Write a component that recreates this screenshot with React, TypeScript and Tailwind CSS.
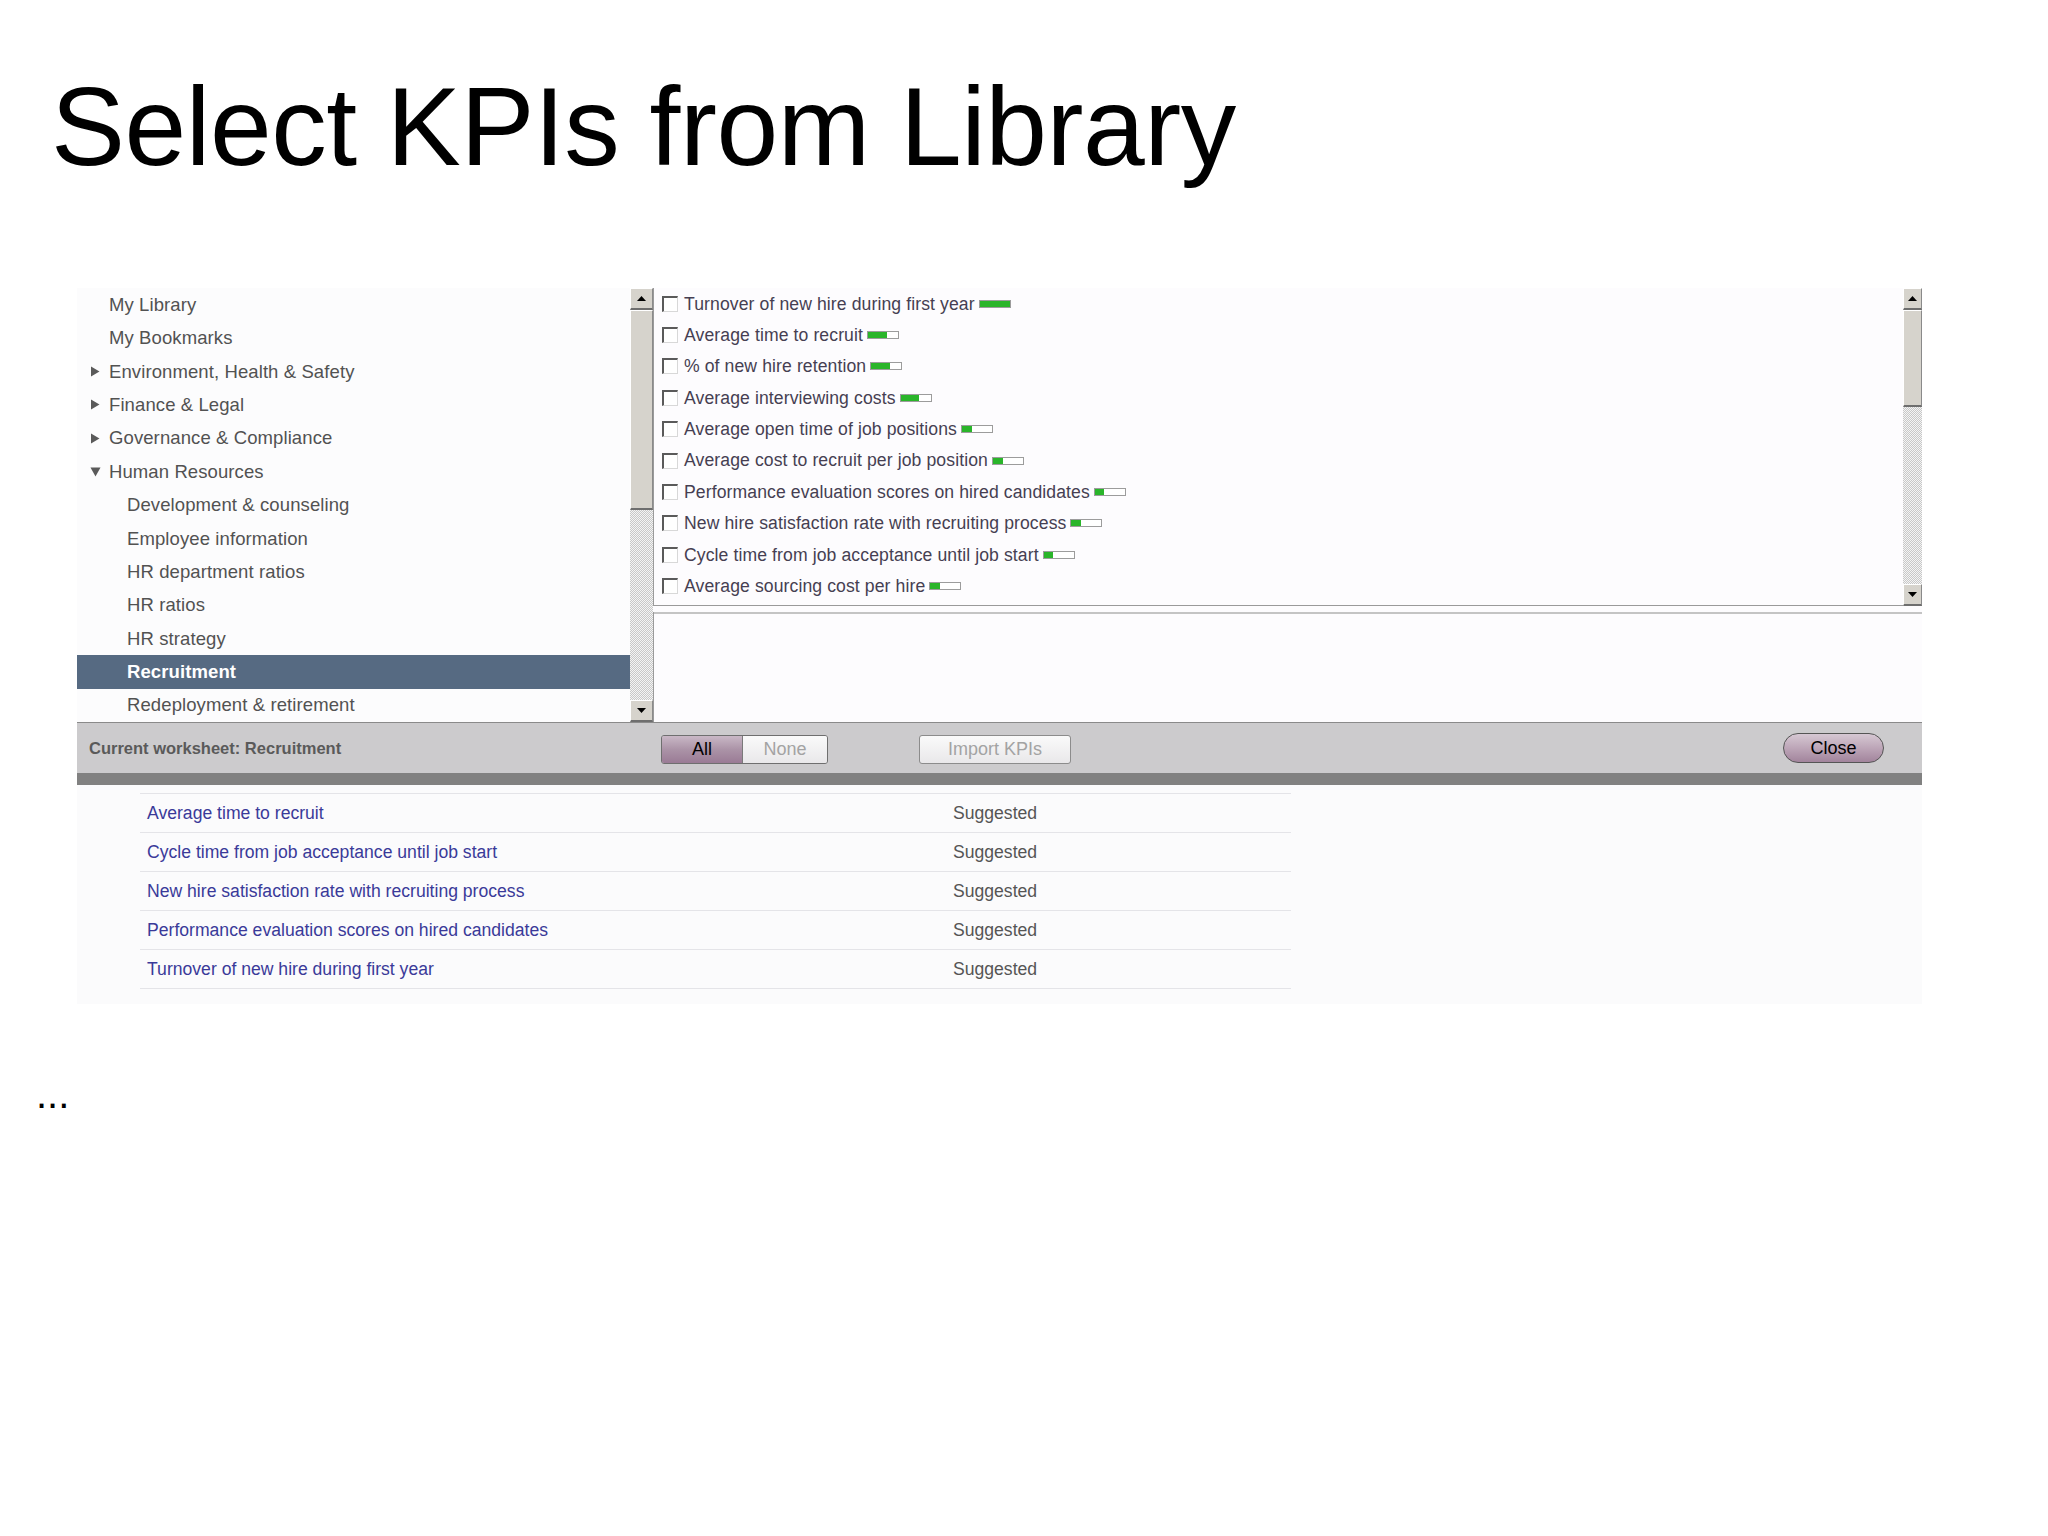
import React from 'react';

const treeItems = [
  { label: 'My Library', level: 0 },
  { label: 'My Bookmarks', level: 0 },
  { label: 'Environment, Health & Safety', level: 0, arrow: 'right' },
  { label: 'Finance & Legal', level: 0, arrow: 'right' },
  { label: 'Governance & Compliance', level: 0, arrow: 'right' },
  { label: 'Human Resources', level: 0, arrow: 'down' },
  { label: 'Development & counseling', level: 1 },
  { label: 'Employee information', level: 1 },
  { label: 'HR department ratios', level: 1 },
  { label: 'HR ratios', level: 1 },
  { label: 'HR strategy', level: 1 },
  { label: 'Recruitment', level: 1, selected: true },
  { label: 'Redeployment & retirement', level: 1 },
];

const kpis = [
  { label: 'Turnover of new hire during first year', score: 100 },
  { label: 'Average time to recruit', score: 62 },
  { label: '% of new hire retention', score: 62 },
  { label: 'Average interviewing costs', score: 62 },
  { label: 'Average open time of job positions', score: 34 },
  { label: 'Average cost to recruit per job position', score: 32 },
  { label: 'Performance evaluation scores on hired candidates', score: 32 },
  { label: 'New hire satisfaction rate with recruiting process', score: 32 },
  { label: 'Cycle time from job acceptance until job start', score: 32 },
  { label: 'Average sourcing cost per hire', score: 32 },
];

const selected = [
  'Average time to recruit',
  'Cycle time from job acceptance until job start',
  'New hire satisfaction rate with recruiting process',
  'Performance evaluation scores on hired candidates',
  'Turnover of new hire during first year',
];

function Arrow({ dir }: { dir: 'up' | 'down' }) {
  return (
    <svg width="9" height="5" viewBox="0 0 9 5">
      {dir === 'up' ? <polygon points="0,5 9,5 4.5,0" fill="#000" /> : <polygon points="0,0 9,0 4.5,5" fill="#000" />}
    </svg>
  );
}

function ScrollButton({ dir }: { dir: 'up' | 'down' }) {
  return (
    <div className="h-[22px] flex items-center justify-center bg-[#d6d3cc] border-t border-l border-t-white border-l-white border-b-2 border-r border-b-[#6e6e6e] border-r-[#8a8a8a]">
      <Arrow dir={dir} />
    </div>
  );
}

function Scrollbar({ thumb, width }: { thumb: string; width: string }) {
  return (
    <div className={`${width} flex flex-col shrink-0`}>
      <ScrollButton dir="up" />
      <div className={`${thumb} bg-[#d6d3cc] border-t border-l border-t-white border-l-white border-b-2 border-r border-b-[#6e6e6e] border-r-[#8a8a8a]`} />
      <div className="flex-1 bg-[repeating-conic-gradient(#c8c8c8_0_25%,#f4f4f4_0_50%)] bg-size-[2px_2px]" />
      <ScrollButton dir="down" />
    </div>
  );
}

function TreeTriangle({ dir }: { dir?: string }) {
  if (!dir) return <span className="w-[19px]" />;
  return (
    <span className="w-[19px] flex items-center">
      <svg width="11" height="11" viewBox="0 0 11 11">
        {dir === 'right' ? (
          <polygon points="1,0.5 9.5,5.5 1,10.5" fill="#5a5a5a" />
        ) : (
          <polygon points="0.5,1.5 10.5,1.5 5.5,10.5" fill="#5a5a5a" />
        )}
      </svg>
    </span>
  );
}

export default function App() {
  return (
    <div className="w-[2048px] h-[1536px] bg-white font-['Liberation_Sans',Arial,sans-serif] overflow-hidden">
      <h1 className="pl-[51px] pt-[72px] text-[111px] leading-none text-black tracking-[-0.5px]">
        Select KPIs from Library
      </h1>

      <div className="ml-[77px] mt-[105px] w-[1845px] bg-[#fbfbfc]">
        {/* browser area */}
        <div className="flex h-[434px]">
          <div className="w-[553px] grid grid-rows-13 bg-[#fcfcfd]">
            {treeItems.map((item) => (
              <div
                key={item.label}
                className={`flex items-center text-[18.5px] tracking-[0.1px] ${
                  item.selected ? 'bg-[#566a82] text-white font-bold' : 'text-[#525252]'
                } ${item.level === 1 ? 'pl-[50px]' : 'pl-[13px]'}`}
              >
                {item.level === 0 && <TreeTriangle dir={item.arrow} />}
                <span>{item.label}</span>
              </div>
            ))}
          </div>

          <Scrollbar width="w-[23px]" thumb="h-[200px]" />

          <div className="flex-1 flex flex-col bg-[#fdfcfe]">
            <div className="flex h-[318px]">
              <div className="flex-1 grid grid-rows-10 pl-[8px] pb-[3px] border-l border-[#9a9a9a] border-b border-b-[#9a9a9a]">
                {kpis.map((k) => (
                  <div key={k.label} className="flex items-center">
                    <span className="w-[16px] h-[16px] bg-white border-t-2 border-l-2 border-t-[#5a5a5a] border-l-[#5a5a5a] border-b border-r border-b-[#d8d8d8] border-r-[#d8d8d8] shrink-0" />
                    <span className="ml-[6px] text-[17.6px] tracking-[0.1px] text-[#463f52]">{k.label}</span>
                    <span className="ml-[4px] w-[32px] h-[8px] bg-white border border-[#9c9c9c] flex">
                      <span className="h-full bg-[#2ab52a]" style={{ width: `${k.score}%` }} />
                    </span>
                  </div>
                ))}
              </div>
              <Scrollbar width="w-[19px]" thumb="h-[97px]" />
            </div>
            <div className="mt-[6px] h-[2px] bg-[#c4c4c4] border-l border-[#9a9a9a]" />
            <div className="flex-1 border-l border-[#9a9a9a]" />
          </div>
        </div>

        {/* action bar */}
        <div className="h-[51px] flex items-center bg-[#cccbcd] border-t border-[#8a8a8a]">
          <div className="w-[584px] pl-[12px] text-[16.5px] font-bold text-[#5a5a5a]">
            Current worksheet: Recruitment
          </div>
          <div className="flex h-[29px] mt-[2px] rounded-[3px] border border-[#6f6f6f] overflow-hidden">
            <button className="w-[81px] bg-linear-to-b from-[#c9b8c6] via-[#ab93a7] to-[#9a7b95] text-[18px] text-black border-r border-[#7a7a7a]">
              All
            </button>
            <button className="w-[84px] bg-linear-to-b from-[#fafafa] to-[#e9e8ea] text-[18px] text-[#a3a3a3]">
              None
            </button>
          </div>
          <button className="ml-[91px] mt-[2px] w-[152px] h-[29px] rounded-[3px] border border-[#8c8c8c] bg-linear-to-b from-[#fafafa] to-[#e9e8ea] text-[18px] text-[#a3a3a3]">
            Import KPIs
          </button>
          <button className="ml-auto mr-[38px] w-[101px] h-[30px] rounded-full border border-[#555555] bg-linear-to-b from-[#d6c8d3] via-[#bda6b8] to-[#a2849c] text-[18px] text-black">
            Close
          </button>
        </div>
        <div className="h-[12px] bg-[#818181]" />

        {/* selected kpis */}
        <div className="h-[219px] pt-[8px] pl-[63px]">
          <div className="w-[1151px] border-t border-[#e4e4e8]">
            {selected.map((s) => (
              <div key={s} className="h-[39px] flex items-center border-b border-[#e4e4e8] text-[17.6px]">
                <span className="w-[813px] pl-[7px] text-[#3a3a99]">{s}</span>
                <span className="text-[#555555]">Suggested</span>
              </div>
            ))}
          </div>
        </div>
      </div>

      <div className="mt-[70px] pl-[36px] text-[40px] leading-none text-black">...</div>
    </div>
  );
}
